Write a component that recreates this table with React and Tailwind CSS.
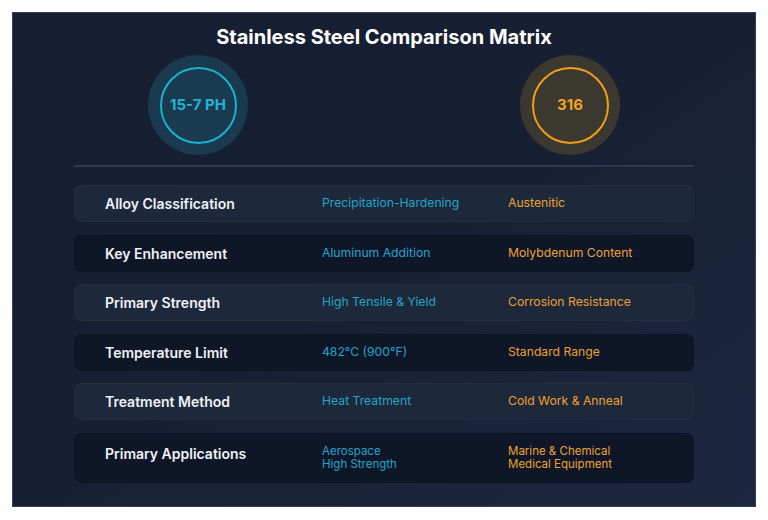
import React from 'react';

const rows = [
    { label: "Alloy Classification", a: ["Precipitation-Hardening"], b: ["Austenitic"] },
    { label: "Key Enhancement", a: ["Aluminum Addition"], b: ["Molybdenum Content"] },
    { label: "Primary Strength", a: ["High Tensile & Yield"], b: ["Corrosion Resistance"] },
    { label: "Temperature Limit", a: ["482°C (900°F)"], b: ["Standard Range"] },
    { label: "Treatment Method", a: ["Heat Treatment"], b: ["Cold Work & Anneal"] },
    { label: "Primary Applications", a: ["Aerospace", "High Strength"], b: ["Marine & Chemical", "Medical Equipment"] },
];

const Cell = ({ lines, color }) => (
    <div className={`flex flex-col ${color} ${lines.length > 1 ? 'text-[11.5px] leading-[13px]' : 'text-[12.2px]'}`}>
        {lines.map((l) => <span key={l}>{l}</span>)}
    </div>
);

const App = () => {
    return (
        <div className="bg-white w-[768px] h-[520px] p-3 font-['Inter',sans-serif]">
            <div className="h-[495px] border border-slate-500/40 bg-gradient-to-br from-[#161e30] via-[#172033] to-[#1c2740] flex flex-col items-center pt-[10px]">
                <h1 className="text-white text-[20px] leading-7 font-bold">Stainless Steel Comparison Matrix</h1>

                {/* Alloy badges */}
                <div className="w-[620px] flex justify-between px-[74px] mt-[4px]">
                    <div className="w-[100px] h-[100px] rounded-full bg-[#1a3a50] flex items-center justify-center">
                        <div className="w-[77px] h-[77px] rounded-full border-[2.5px] border-[#17b3d3] flex items-center justify-center">
                            <span className="text-[#22b5d6] font-bold text-[15px]">15-7 PH</span>
                        </div>
                    </div>
                    <div className="w-[100px] h-[100px] rounded-full bg-[#3b3830] flex items-center justify-center">
                        <div className="w-[77px] h-[77px] rounded-full border-[2.5px] border-[#f29e18] flex items-center justify-center">
                            <span className="text-[#f2a324] font-bold text-[15px]">316</span>
                        </div>
                    </div>
                </div>

                <div className="w-[620px] h-[2px] bg-[#2b3a4e] mt-[10px]"></div>

                <div className="w-[620px] flex flex-col gap-[12.5px] mt-[18px]">
                    {rows.map((r, i) => (
                        <div
                            key={r.label}
                            className={`flex items-center rounded-lg ${r.a.length > 1 ? 'h-[50px]' : 'h-[37px]'} ${i % 2 === 0 ? 'bg-[#1e283b] border border-white/[0.03]' : 'bg-[#0f1628] border border-black/10'}`}
                        >
                            <div className={`w-[247px] pl-[30px] text-[#eef2f7] font-semibold text-[14px] ${r.a.length > 1 ? '-mt-[8px]' : ''}`}>{r.label}</div>
                            <div className="w-[186px]">
                                <Cell lines={r.a} color="text-[#22a6c8]" />
                            </div>
                            <div className="flex-1">
                                <Cell lines={r.b} color="text-[#eba230]" />
                            </div>
                        </div>
                    ))}
                </div>
            </div>
        </div>
    );
};

export default App;
